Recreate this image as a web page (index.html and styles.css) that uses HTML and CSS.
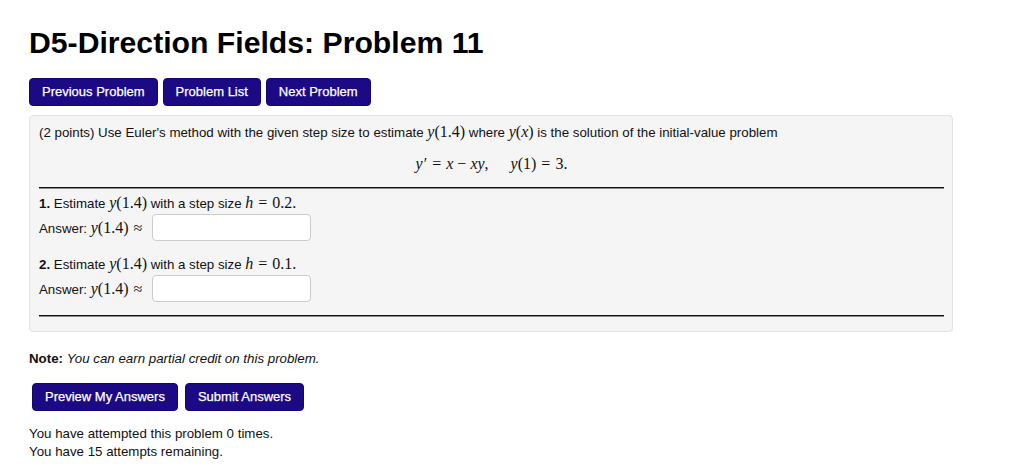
FILE: index.html
```html
<!DOCTYPE html>
<html>
<head>
<meta charset="utf-8">
<link rel="stylesheet" href="styles.css">
</head>
<body>
<div class="page">
  <h1 class="title">D5-Direction Fields: Problem 11</h1>
  <div class="nav">
    <button class="btn">Previous Problem</button>
    <button class="btn">Problem List</button>
    <button class="btn">Next Problem</button>
  </div>
  <div class="problem">
    <p class="intro">(2 points) Use Euler's method with the given step size to estimate <span class="m"><i>y</i>(1.4)</span> where <span class="m"><i>y</i>(<i>x</i>)</span> is the solution of the initial-value problem</p>
    <div class="display"><span class="m"><i>y</i><span class="prime">′</span><span class="rel">=</span><i>x</i><span class="op">−</span><i>xy</i>,</span><span class="m gap"><i>y</i>(1)<span class="rel">=</span>3.</span></div>
    <div class="rule"></div>
    <p class="item"><b>1.</b> Estimate <span class="m"><i>y</i>(1.4)</span> with a step size <span class="m"><i>h</i><span class="rel">=</span>0.2.</span></p>
    <div class="answer"><span>Answer: <span class="m"><i>y</i>(1.4)<span class="rel">≈</span></span></span><span class="field"></span></div>
    <p class="item item2"><b>2.</b> Estimate <span class="m"><i>y</i>(1.4)</span> with a step size <span class="m"><i>h</i><span class="rel">=</span>0.1.</span></p>
    <div class="answer"><span>Answer: <span class="m"><i>y</i>(1.4)<span class="rel">≈</span></span></span><span class="field"></span></div>
    <div class="rule rule-end"></div>
  </div>
  <p class="note"><b>Note:</b> <i>You can earn partial credit on this problem.</i></p>
  <div class="actions">
    <button class="btn">Preview My Answers</button>
    <button class="btn">Submit Answers</button>
  </div>
  <p class="status">You have attempted this problem 0 times.<br>You have 15 attempts remaining.</p>
</div>
</body>
</html>
```

FILE: styles.css
```css
html, body {
  margin: 0;
  padding: 0;
  background: #fff;
}
body {
  font-family: "Liberation Sans", Arial, sans-serif;
  font-size: 13.3px;
  color: #111;
}
.page {
  padding: 25px 0 0 29px;
  width: 924px;
}
.title {
  margin: 0;
  font-size: 30.2px;
  line-height: 36px;
  font-weight: bold;
  color: #000;
}
.nav {
  display: flex;
  gap: 5px;
  margin-top: 17px;
}
.btn {
  font-family: "Liberation Sans", Arial, sans-serif;
  font-size: 13px;
  color: #fff;
  -webkit-text-stroke: 0.25px #fff;
  background: #1c0a84;
  border: 1px solid #15066d;
  border-radius: 4px;
  height: 28px;
  padding: 0 12px;
  line-height: 26px;
}
.problem {
  margin-top: 9px;
  background: #f5f5f5;
  border: 1px solid #e3e3e3;
  border-radius: 4px;
  padding: 8px 8px 14px 9px;
}
.intro {
  margin: 0;
  height: 18px;
  line-height: 18px;
}
.m {
  font-family: "Liberation Serif", "Times New Roman", serif;
  font-size: 16px;
  line-height: 1;
}
.prime {
  margin-left: 1px;
}
.rel {
  margin: 0 5px;
}
.op {
  margin: 0 4px;
}
.display {
  margin-top: 11px;
  height: 24px;
  line-height: 24px;
  text-align: center;
}
.gap {
  margin-left: 22px;
}
.rule {
  margin-top: 10px;
  border-top: 1px solid #111;
  border-bottom: 1px solid #888;
}
.item {
  margin: 6px 0 0;
  height: 18px;
  line-height: 18px;
}
.item2 {
  margin-top: 15px;
}
.answer {
  margin-top: 1px;
  display: flex;
  align-items: center;
  gap: 5px;
  height: 27px;
}
.field {
  width: 157px;
  height: 25px;
  background: #fff;
  border: 1px solid #ccc;
  border-radius: 4px;
}
.rule-end {
  margin-top: 13px;
}
.note {
  margin: 18px 0 0;
  height: 18px;
  line-height: 18px;
}
.actions {
  display: flex;
  gap: 7px;
  margin: 15px 0 0 3px;
}
.status {
  margin: 14px 0 0;
  line-height: 18px;
}
```
